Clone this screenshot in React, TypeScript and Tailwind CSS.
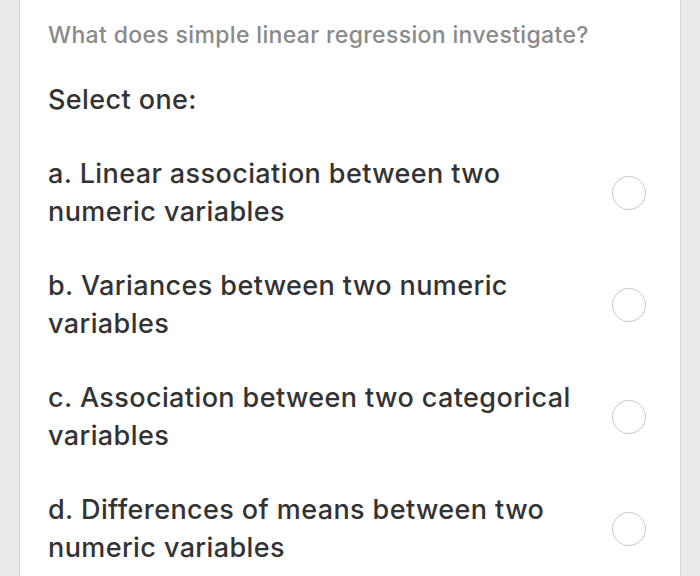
const options = [
  "a. Linear association between two numeric variables",
  "b. Variances between two numeric variables",
  "c. Association between two categorical variables",
  "d. Differences of means between two numeric variables",
];

export default function App() {
  return (
    <div
      className="h-[576px] w-[700px] overflow-hidden bg-[#ebebeb]"
      style={{ fontFamily: "Inter, 'Noto Sans', sans-serif" }}
    >
      <div className="ml-[19px] h-full w-[662px] border-x border-[#d6d6d6] bg-white pl-[28px] pr-[34px]">
        <div className="pt-[20px] text-[23px] leading-[30px] font-medium tracking-[0.35px] text-[#8a8a8a]">
          What does simple linear regression investigate?
        </div>
        <div className="mt-[33px] text-[27px] leading-[34px] font-medium tracking-[0.4px] text-[#333333]">
          Select one:
        </div>
        <div className="mt-[38px] flex flex-col gap-[36px]">
          {options.map((opt) => (
            <div key={opt} className="flex items-center justify-between">
              <div className="w-[535px] text-[27px] leading-[38px] font-medium tracking-[0.4px] text-[#333333]">
                {opt}
              </div>
              <div className="h-[34px] w-[34px] rounded-full border-[1.5px] border-[#c8c8c8]" />
            </div>
          ))}
        </div>
      </div>
    </div>
  );
}
